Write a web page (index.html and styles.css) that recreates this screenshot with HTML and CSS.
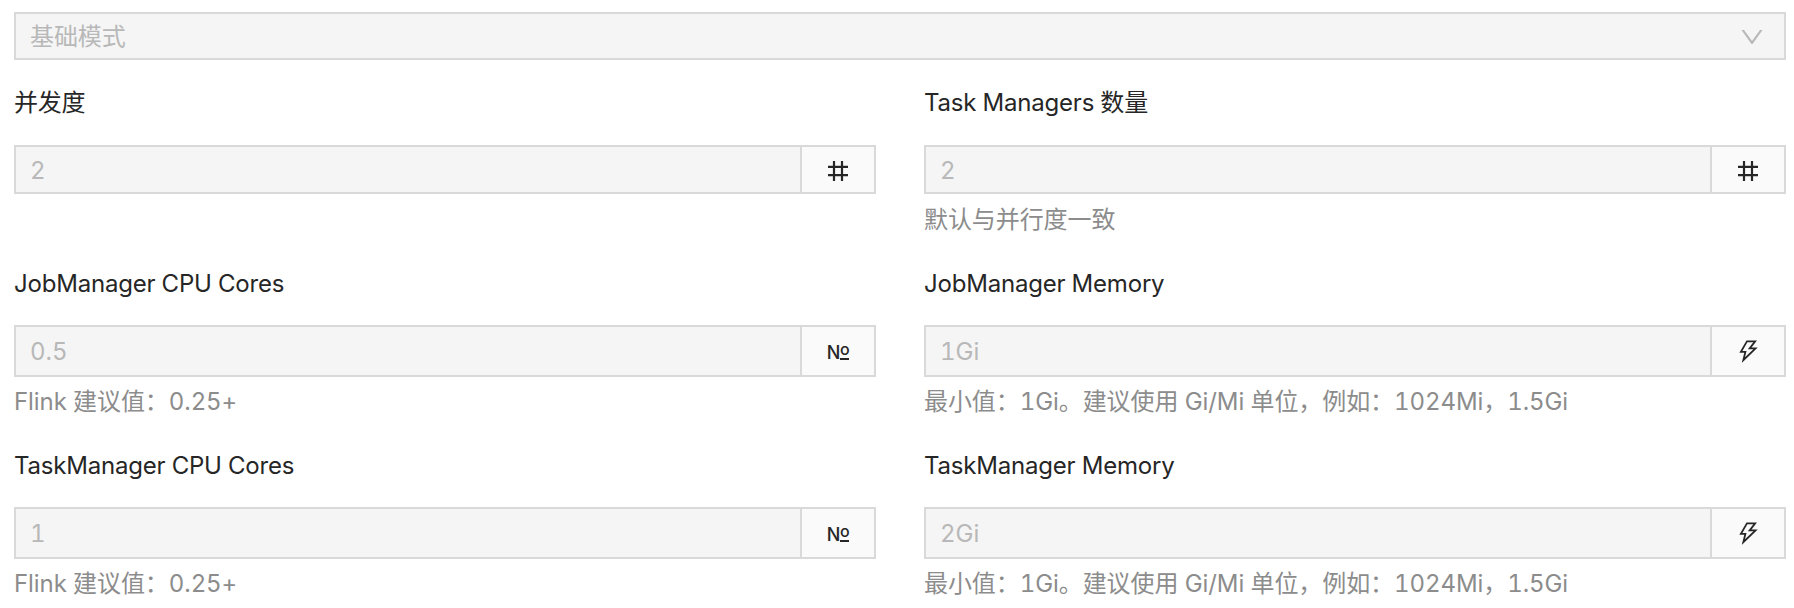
FILE: index.html
```html
<!DOCTYPE html>
<html lang="zh-CN">
<head>
    <meta charset="utf-8">
    <meta name="viewport" content="width=device-width, initial-scale=1">
    <title>资源配置</title>
    <link rel="stylesheet" href="styles.css">
</head>
<body>
    <svg class="symbols" width="0" height="0">
        <symbol id="icon-hash" viewBox="0 0 20 20">
            <path d="M6 0v20M14 0v20M0 5.8h20M0 14.2h20" fill="none" stroke="currentColor" stroke-width="2.2" />
        </symbol>
        <symbol id="icon-bolt" viewBox="0 0 1024 1024">
            <path d="M848 359.3H627.7L825.8 109c4.1-5.3.4-13-6.3-13H436c-2.8 0-5.5 1.5-6.9 4L170 547.5c-3.1 5.3.7 12 6.9 12h174.4l-89.4 357.6c-1.9 7.8 7.5 13.3 13.3 7.7L853.5 373c5.2-4.9 1.7-13.7-5.5-13.7zM378.2 732.5l60.3-241H281.1l189.6-327.4h224.6L487 427.4h211L378.2 732.5z" fill="currentColor" />
        </symbol>
    </svg>

    <form class="resource-form">
        <div class="select">
            <span>基础模式</span>
            <svg class="arrow" viewBox="0 0 1024 1024">
                <path d="M884 256h-75c-5.1 0-9.9 2.5-12.9 6.6L512 654.2 227.9 262.6c-3-4.1-7.8-6.6-12.9-6.6h-75c-6.5 0-10.3 7.4-6.5 12.7l352.6 486.1c12.8 17.6 39 17.6 51.7 0l352.6-486.1c3.9-5.3.1-12.7-6.4-12.7z" fill="currentColor" />
            </svg>
        </div>

        <div class="fields">
            <div class="field count">
                <label for="parallelism">并发度</label>
                <div class="group">
                    <input type="text" id="parallelism" value="2" disabled>
                    <span class="addon"><svg class="hash"><use href="#icon-hash" /></svg></span>
                </div>
            </div>
            <div class="field count">
                <label for="tmCount">Task Managers 数量</label>
                <div class="group">
                    <input type="text" id="tmCount" value="2" disabled>
                    <span class="addon"><svg class="hash"><use href="#icon-hash" /></svg></span>
                </div>
                <div class="help">默认与并行度一致</div>
            </div>

            <div class="field">
                <label for="jmCpu">JobManager CPU Cores</label>
                <div class="group">
                    <input type="text" id="jmCpu" value="0.5" disabled>
                    <span class="addon number">N<span class="ordinal">o</span></span>
                </div>
                <div class="help">Flink 建议值：0.25+</div>
            </div>
            <div class="field">
                <label for="jmMemory">JobManager Memory</label>
                <div class="group">
                    <input type="text" id="jmMemory" value="1Gi" disabled>
                    <span class="addon"><svg class="bolt"><use href="#icon-bolt" /></svg></span>
                </div>
                <div class="help">最小值：1Gi。建议使用 Gi/Mi 单位，例如：1024Mi，1.5Gi</div>
            </div>

            <div class="field">
                <label for="tmCpu">TaskManager CPU Cores</label>
                <div class="group">
                    <input type="text" id="tmCpu" value="1" disabled>
                    <span class="addon number">N<span class="ordinal">o</span></span>
                </div>
                <div class="help">Flink 建议值：0.25+</div>
            </div>
            <div class="field">
                <label for="tmMemory">TaskManager Memory</label>
                <div class="group">
                    <input type="text" id="tmMemory" value="2Gi" disabled>
                    <span class="addon"><svg class="bolt"><use href="#icon-bolt" /></svg></span>
                </div>
                <div class="help">最小值：1Gi。建议使用 Gi/Mi 单位，例如：1024Mi，1.5Gi</div>
            </div>
        </div>
    </form>
</body>
</html>
```
FILE: styles.css
```css
* {
    box-sizing: border-box;
}

body {
    margin: 0;
    background-color: #fff;
    color: #262626;
    font-family: Inter, "Noto Sans CJK SC", sans-serif;
    font-size: 24px;
    font-variant-numeric: tabular-nums;
    line-height: 36px;
}

.symbols {
    display: none;
}

.resource-form {
    padding: 12px 8px 0 14px;
}

.select {
    display: flex;
    align-items: center;
    justify-content: space-between;
    height: 48px;
    padding: 0 18px 0 14px;
    border: 2px solid #d9d9d9;
    background-color: #f5f5f5;
    color: #b8b8b8;
}

.select span {
    padding-top: 2px;
    letter-spacing: -0.1px;
}

.arrow {
    width: 28px;
    height: 28px;
    margin-top: 2px;
}

.fields {
    display: grid;
    grid-template-columns: 1fr 1fr;
    column-gap: 48px;
    row-gap: 28px;
    margin-top: 25px;
}

.field label {
    display: block;
    margin-bottom: 23px;
    letter-spacing: -0.2px;
}

.group {
    display: flex;
    height: 52px;
    border: 2px solid #d9d9d9;
}

.count label {
    margin-bottom: 24px;
}

.count .group {
    height: 49px;
}

input[type=text] {
    flex: 1;
    min-width: 0;
    padding: 2px 14px 0;
    border: none;
    background-color: #f5f5f5;
    color: #b8b8b8;
    font: inherit;
    font-variant-numeric: tabular-nums;
}

.addon {
    display: flex;
    align-items: center;
    justify-content: center;
    width: 74px;
    border-left: 2px solid #d9d9d9;
    background-color: #fafafa;
}

.number {
    padding-top: 3px;
    font-size: 18px;
    font-weight: 500;
    letter-spacing: -0.5px;
}

/* raised "o" with a bar on the baseline */
.ordinal {
    height: 14px;
    border-bottom: 2px solid #262626;
    font-size: 16px;
    line-height: 7px;
}

.hash {
    width: 20px;
    height: 20px;
    margin-top: 2px;
}

.bolt {
    width: 27px;
    height: 27px;
    margin-top: 1px;
}

.help {
    margin-top: 7px;
    color: #8c8c8c;
    letter-spacing: -0.08px;
}

.count .help {
    margin-top: 8px;
}
```
